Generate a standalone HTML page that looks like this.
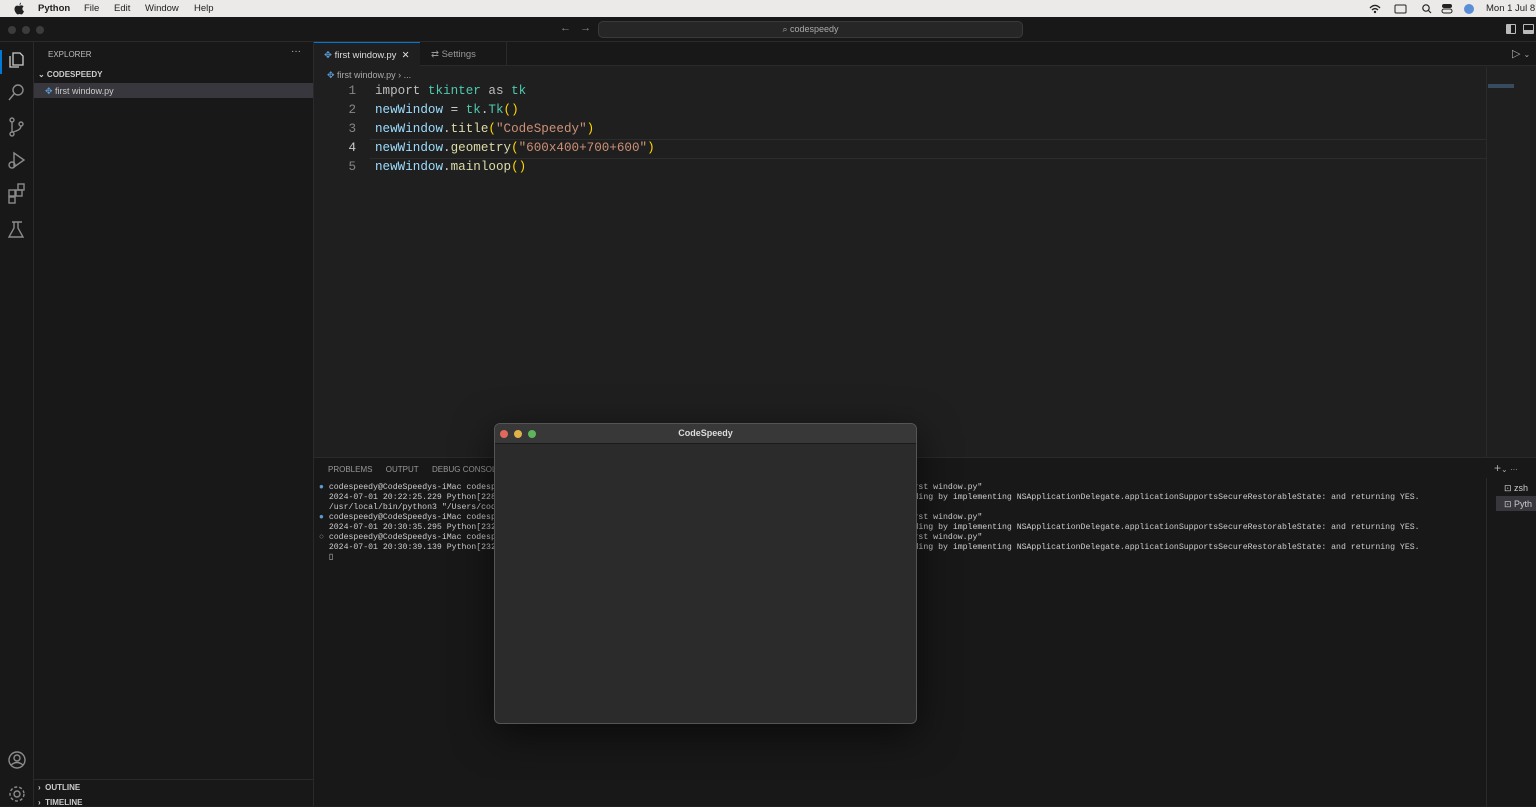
<!DOCTYPE html>
<html><head><style>
*{margin:0;padding:0;box-sizing:border-box}
body{width:1536px;height:806px;overflow:hidden;background:#1f1f1f;font-family:"Liberation Sans",sans-serif;position:relative}
.a{position:absolute}
.mono{font-family:"Liberation Mono",monospace;white-space:pre}
.ico{stroke:#8b8b8b;fill:none;stroke-width:1.4}
</style></head><body>
<!-- menu bar -->
<div class="a" style="left:0;top:0;width:1536px;height:17px;background:#ebeae8;font-size:9.5px;color:#222">
 <svg class="a" style="left:13px;top:2px" width="12" height="13" viewBox="0 0 12 13"><path d="M8 0.5 Q8.2 2.2 6.6 3.2 Q6.3 1.6 8 0.5Z M6 4 Q7.5 3.2 8.8 3.4 Q10 3.6 10.6 4.6 Q9.2 5.5 9.4 7.2 Q9.6 8.7 11 9.3 Q10.4 11 9.4 12 Q8.6 12.8 7.6 12.3 Q6.6 11.8 5.6 12.3 Q4.4 12.8 3.6 11.8 Q1 8.8 1.6 6 Q2.2 3.6 4.4 3.6 Q5.2 3.6 6 4Z" fill="#222"/></svg>
 <span class="a" style="left:38px;top:3px;font-weight:bold">Python</span>
 <span class="a" style="left:84px;top:3px">File</span>
 <span class="a" style="left:114px;top:3px">Edit</span>
 <span class="a" style="left:145px;top:3px">Window</span>
 <span class="a" style="left:194px;top:3px">Help</span>
 <span class="a" style="left:1486px;top:3px">Mon 1 Jul 8</span>
 <svg class="a" style="left:1368px;top:3px" width="120" height="12"><path d="M2 5 Q7 0 12 5 M4 7 Q7 4 10 7" stroke="#222" fill="none" stroke-width="1.3"/><circle cx="7" cy="9" r="1.2" fill="#222"/><rect x="27" y="2" width="11" height="8" rx="1" stroke="#222" fill="none"/><circle cx="58" cy="5" r="3.2" stroke="#222" fill="none" stroke-width="1.2"/><path d="M60 7 L63 10" stroke="#222" stroke-width="1.2"/><rect x="74" y="1" width="10" height="4" rx="2" fill="#222"/><rect x="74" y="6" width="10" height="4" rx="2" stroke="#222" fill="none"/><circle cx="101" cy="6" r="5" fill="#5a8ed6"/></svg>
</div>
<!-- title bar -->
<div class="a" style="left:0;top:17px;width:1536px;height:25px;background:#181818;border-bottom:1px solid #2a2a2a">
 <div class="a" style="left:8px;top:9px;width:8px;height:8px;border-radius:50%;background:#3c3c3c"></div>
 <div class="a" style="left:22px;top:9px;width:8px;height:8px;border-radius:50%;background:#3c3c3c"></div>
 <div class="a" style="left:36px;top:9px;width:8px;height:8px;border-radius:50%;background:#3c3c3c"></div>
 <span class="a" style="left:560px;top:5px;color:#888;font-size:11px">←&nbsp;&nbsp;&nbsp;→</span>
 <div class="a" style="left:598px;top:4px;width:425px;height:17px;background:#262626;border:1px solid #3a3a3a;border-radius:5px;color:#aaa;font-size:9px;text-align:center;line-height:15px">⌕ codespeedy</div>
 <div class="a" style="left:1506px;top:7px;width:10px;height:10px;border:1.3px solid #bbb;border-left-width:5px;border-radius:1px"></div>
 <div class="a" style="left:1523px;top:7px;width:11px;height:10px;border:1.3px solid #bbb;border-bottom-width:4px;border-radius:1px"></div>
</div>
<!-- activity bar -->
<div class="a" style="left:0;top:42px;width:34px;height:764px;background:#181818;border-right:1px solid #2a2a2a">
 <div class="a" style="left:0;top:8px;width:2px;height:24px;background:#0078d4"></div>
 <svg class="a" style="left:7px;top:8px" width="20" height="200">
  <path d="M6 3h7l3 3v9H6z M3 6v11h9" stroke="#ccc" fill="none" stroke-width="1.3"/>
  <circle cx="11" cy="40" r="5" class="ico"/><path d="M7 44 L2 50" class="ico"/>
  <circle cx="5" cy="70" r="2" class="ico"/><circle cx="5" cy="84" r="2" class="ico"/><circle cx="14" cy="74" r="2" class="ico"/><path d="M5 72v10 M14 76 Q14 80 6 82" class="ico"/>
  <path d="M7 103 L17 110 L7 117 Z" class="ico"/><circle cx="5" cy="115" r="3" class="ico"/>
  <rect x="2" y="140" width="6" height="6" class="ico"/><rect x="9" y="140" width="6" height="6" class="ico"/><rect x="2" y="147" width="6" height="6" class="ico"/><rect x="11" y="134" width="6" height="6" class="ico"/>
  <path d="M7 172v6l-5 9h14l-5-9v-6 M5 172h10" class="ico"/>
 </svg>
 <svg class="a" style="left:7px;top:708px" width="20" height="56">
  <circle cx="10" cy="10" r="8" class="ico"/><circle cx="10" cy="8" r="3" class="ico"/><path d="M4 15 Q10 10 16 15" class="ico"/>
  <circle cx="10" cy="44" r="3" class="ico"/><circle cx="10" cy="44" r="7" class="ico" stroke-dasharray="3 2"/>
 </svg>
</div>
<!-- sidebar -->
<div class="a" style="left:34px;top:42px;width:280px;height:764px;background:#181818;border-right:1px solid #2a2a2a;font-size:8px;color:#ccc">
 <span class="a" style="left:14px;top:8px;color:#bbb">EXPLORER</span>
 <span class="a" style="left:257px;top:4px;color:#bbb;font-size:10px">···</span>
 <span class="a" style="left:4px;top:28px;font-weight:bold">⌄ CODESPEEDY</span>
 <div class="a" style="left:0;top:41px;width:279px;height:15px;background:#37373d"></div>
 <span class="a" style="left:11px;top:44px;font-size:9px"><span style="color:#5a9bd5">✥</span> first window.py</span>
 <div class="a" style="left:0;top:737px;width:279px;border-top:1px solid #2a2a2a"></div>
 <span class="a" style="left:4px;top:741px;font-weight:bold">›&nbsp; OUTLINE</span>
 <span class="a" style="left:4px;top:756px;font-weight:bold">›&nbsp; TIMELINE</span>
</div>
<!-- tabs -->
<div class="a" style="left:314px;top:42px;width:1222px;height:24px;background:#181818;border-bottom:1px solid #2a2a2a;font-size:9.5px">
 <div class="a" style="left:0;top:0;width:106px;height:25px;background:#1f1f1f;border-top:1px solid #0078d4;color:#ddd;padding:7px 0 0 10px"><span style="color:#5a9bd5">✥</span> first window.py &nbsp;✕</div>
 <div class="a" style="left:107px;top:0;width:86px;height:24px;color:#999;padding:7px 0 0 10px;border-right:1px solid #2a2a2a">⇄ Settings</div>
 <span class="a" style="left:1198px;top:5px;color:#aaa;font-size:11px">▷ <span style="font-size:8px">⌄</span></span>
</div>
<span class="a" style="left:327px;top:70px;color:#aaa;font-size:9px"><span style="color:#5a9bd5">✥</span> first window.py › ...</span>
<!-- code -->
<div class="a mono" style="left:330px;top:82px;font-size:12.6px;line-height:19px;color:#858585;text-align:right;width:26px">1
2
3
<span style="color:#ccc">4</span>
5</div>
<div class="a" style="left:370px;top:139px;width:1116px;height:20px;border-top:1px solid #2c2c2c;border-bottom:1px solid #2c2c2c"></div>
<div class="a mono" style="left:375px;top:82px;font-size:12.6px;line-height:19px;color:#9cdcfe"><span style="color:#bdbdbd">import</span> <span style="color:#4ec9b0">tkinter</span> <span style="color:#bdbdbd">as</span> <span style="color:#4ec9b0">tk</span>
newWindow <span style="color:#ccc">=</span> <span style="color:#4ec9b0">tk</span><span style="color:#ccc">.</span><span style="color:#4ec9b0">Tk</span><span style="color:#ffd700">()</span>
newWindow<span style="color:#ccc">.</span><span style="color:#dcdcaa">title</span><span style="color:#ffd700">(</span><span style="color:#ce9178">"CodeSpeedy"</span><span style="color:#ffd700">)</span>
newWindow<span style="color:#ccc">.</span><span style="color:#dcdcaa">geometry</span><span style="color:#ffd700">(</span><span style="color:#ce9178">"600x400+700+600"</span><span style="color:#ffd700">)</span>
newWindow<span style="color:#ccc">.</span><span style="color:#dcdcaa">mainloop</span><span style="color:#ffd700">()</span></div>
<div class="a" style="left:1488px;top:84px;width:26px;height:4px;background:#4a6a8a;opacity:.6"></div>
<div class="a" style="left:1486px;top:67px;width:1px;height:390px;background:#2a2a2a"></div>
<!-- panel -->
<div class="a" style="left:314px;top:457px;width:1222px;height:349px;background:#181818;border-top:1px solid #2a2a2a">
 <span class="a" style="left:14px;top:7px;font-size:8px;color:#999">PROBLEMS&nbsp;&nbsp;&nbsp;&nbsp;&nbsp;&nbsp;OUTPUT&nbsp;&nbsp;&nbsp;&nbsp;&nbsp;&nbsp;DEBUG CONSOLE</span>
 <span class="a" style="left:1180px;top:3px;color:#aaa;font-size:12px">+<span style="font-size:8px">⌄ ···</span></span>
 <div class="a" style="left:1172px;top:20px;width:1px;height:329px;background:#2a2a2a"></div>
 <span class="a" style="left:1190px;top:25px;color:#ccc;font-size:9px">⊡ zsh</span>
 <div class="a" style="left:1182px;top:38px;width:40px;height:15px;background:#37373d"></div>
 <span class="a" style="left:1190px;top:41px;color:#ccc;font-size:9px">⊡ Pyth</span>
</div>
<div class="a mono" style="left:319px;top:483px;font-size:8.2px;line-height:10px;color:#ccc"><span style="color:#5a9bd5">●</span> codespeedy@CodeSpeedys-iMac codespeedy % /usr/local/bin/python3 "/Users/codespeedy/Desktop/Python_Project/codespeedy/first window.py"
  2024-07-01 20:22:25.229 Python[2281:87563] WARNING: Secure coding is not enabled for restorable state! Enable secure coding by implementing NSApplicationDelegate.applicationSupportsSecureRestorableState: and returning YES.
  /usr/local/bin/python3 "/Users/codespeedy/Desktop/codespeedy/first window.py"
<span style="color:#5a9bd5">●</span> codespeedy@CodeSpeedys-iMac codespeedy % /usr/local/bin/python3 "/Users/codespeedy/Desktop/Python_Project/codespeedy/first window.py"
  2024-07-01 20:30:35.295 Python[2321:91563] WARNING: Secure coding is not enabled for restorable state! Enable secure coding by implementing NSApplicationDelegate.applicationSupportsSecureRestorableState: and returning YES.
<span style="color:#888">○</span> codespeedy@CodeSpeedys-iMac codespeedy % /usr/local/bin/python3 "/Users/codespeedy/Desktop/Python_Project/codespeedy/first window.py"
  2024-07-01 20:30:39.139 Python[2329:91863] WARNING: Secure coding is not enabled for restorable state! Enable secure coding by implementing NSApplicationDelegate.applicationSupportsSecureRestorableState: and returning YES.
  ▯</div>
<!-- tk window -->
<div class="a" style="left:494px;top:423px;width:423px;height:301px;background:#2b2b2b;border:1px solid #555;border-radius:6px;box-shadow:0 10px 40px rgba(0,0,0,.6);overflow:hidden">
 <div style="height:20px;background:#383838;border-bottom:1px solid #1a1a1a;color:#ddd;font-size:9px;font-weight:bold;text-align:center;line-height:19px;position:relative">CodeSpeedy
  <div class="a" style="left:5px;top:6px;width:8px;height:8px;border-radius:50%;background:#e0695e"></div>
  <div class="a" style="left:19px;top:6px;width:8px;height:8px;border-radius:50%;background:#e0b24a"></div>
  <div class="a" style="left:33px;top:6px;width:8px;height:8px;border-radius:50%;background:#5fb65a"></div>
 </div>
</div>
</body></html>
